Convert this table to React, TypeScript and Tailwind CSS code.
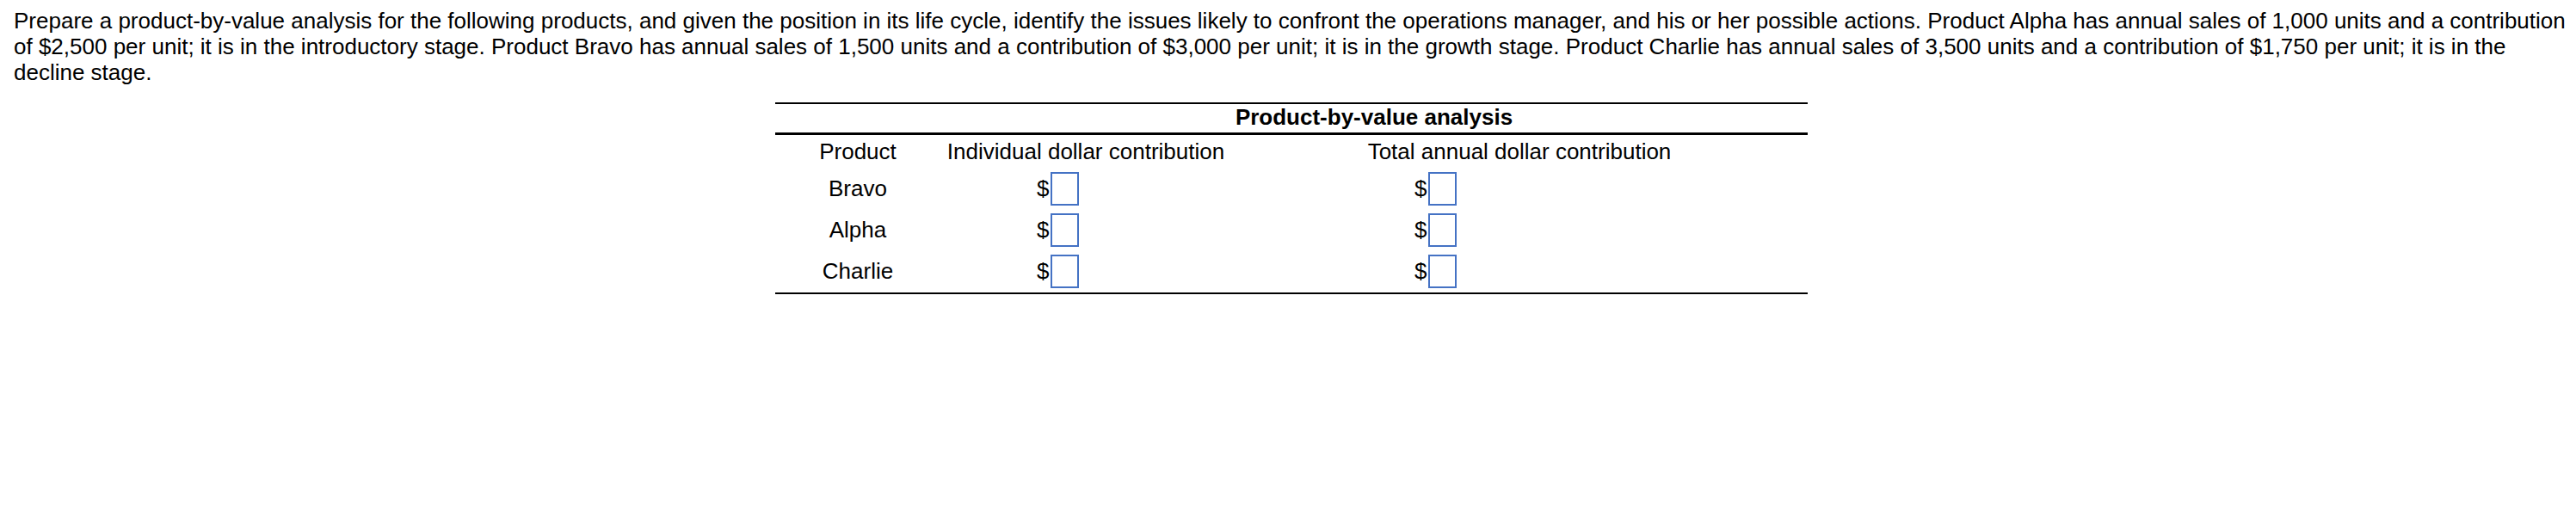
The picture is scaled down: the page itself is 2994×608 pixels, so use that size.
const rows = ["Bravo", "Alpha", "Charlie"];

function MoneyInput() {
  return (
    <div className="flex items-center">
      <span>$</span>
      <div className="ml-[2px] w-[33px] h-[39px] border-2 border-[#4472c4] bg-white" />
    </div>
  );
}

export default function App() {
  return (
    <div className="w-[2994px] h-[608px] bg-white text-black text-[26px] leading-[30px] font-['Liberation_Sans',Arial,sans-serif]">
      <p className="pl-[16px] pr-[8px] pt-[9px]">
        Prepare a product-by-value analysis for the following products, and given the position in its life cycle, identify the issues likely to confront the operations manager, and his or her possible actions. Product Alpha has annual sales of 1,000 units and a contribution of $2,500 per unit; it is in the introductory stage. Product Bravo has annual sales of 1,500 units and a contribution of $3,000 per unit; it is in the growth stage. Product Charlie has annual sales of 3,500 units and a contribution of $1,750 per unit; it is in the decline stage.
      </p>

      <div className="pl-[16px] pr-[8px] mt-[20px]">
        <div className="mx-auto w-[1200px] border-t-2 border-b-2 border-black pb-[1px]">
          <div className="grid grid-cols-[192px_338px_670px] h-[36px] border-b-[3px] border-black">
            <div />
            <div className="col-span-2 flex items-center justify-center pb-[4px] font-bold">
              Product-by-value analysis
            </div>
          </div>

          <div className="grid grid-cols-[192px_338px_670px] h-[38px] items-center text-center">
            <div>Product</div>
            <div>Individual dollar contribution</div>
            <div>Total annual dollar contribution</div>
          </div>

          {rows.map((name) => (
            <div key={name} className="grid grid-cols-[192px_338px_670px] h-[48px] items-center">
              <div className="text-center">{name}</div>
              <div className="pl-[112px]">
                <MoneyInput />
              </div>
              <div className="pl-[213px]">
                <MoneyInput />
              </div>
            </div>
          ))}
        </div>
      </div>
    </div>
  );
}
